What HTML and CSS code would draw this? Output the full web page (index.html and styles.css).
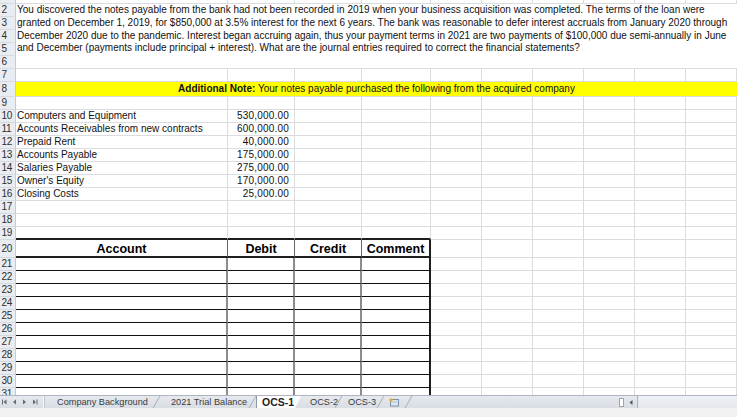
FILE: index.html
```html
<!DOCTYPE html>
<html>
<head>
<meta charset="utf-8">
<link rel="stylesheet" href="styles.css">
</head>
<body>
<div class="sheet">
  <div class="row r1"><div class="rh"></div><div></div><div></div><div></div><div></div><div></div><div></div><div></div><div></div><div></div><div></div></div>
  <div class="block">
    <div class="rhcol"><div class="rh">2</div><div class="rh">3</div><div class="rh">4</div><div class="rh">5</div><div class="rh">6</div></div>
    <div class="note">You discovered the notes payable from the bank had not been recorded in 2019 when your business acquisition was completed. The terms of the loan were<br>granted on December 1, 2019, for $850,000 at 3.5% interest for the next 6 years. The bank was reasonable to defer interest accruals from January 2020 through<br>December 2020 due to the pandemic. Interest began accruing again, thus your payment terms in 2021 are two payments of $100,000 due semi-annually in June<br>and December (payments include principal + interest). What are the journal entries required to correct the financial statements?</div>
  </div>
  <div class="row"><div class="rh">7</div><div></div><div></div><div></div><div></div><div></div><div></div><div></div><div></div><div></div><div></div></div>
  <div class="row r8"><div class="rh">8</div><div class="yl"><b>Additional Note:</b> Your notes payable purchased the following from the acquired company</div></div>
  <div class="row"><div class="rh">9</div><div></div><div></div><div></div><div></div><div></div><div></div><div></div><div></div><div></div><div></div></div>
  <div class="row"><div class="rh">10</div><div class="t">Computers and Equipment</div><div class="n">530,000.00</div><div></div><div></div><div></div><div></div><div></div><div></div><div></div><div></div></div>
  <div class="row"><div class="rh">11</div><div class="t">Accounts Receivables from new contracts</div><div class="n">600,000.00</div><div></div><div></div><div></div><div></div><div></div><div></div><div></div><div></div></div>
  <div class="row"><div class="rh">12</div><div class="t">Prepaid Rent</div><div class="n">40,000.00</div><div></div><div></div><div></div><div></div><div></div><div></div><div></div><div></div></div>
  <div class="row"><div class="rh">13</div><div class="t">Accounts Payable</div><div class="n">175,000.00</div><div></div><div></div><div></div><div></div><div></div><div></div><div></div><div></div></div>
  <div class="row"><div class="rh">14</div><div class="t">Salaries Payable</div><div class="n">275,000.00</div><div></div><div></div><div></div><div></div><div></div><div></div><div></div><div></div></div>
  <div class="row"><div class="rh">15</div><div class="t">Owner's Equity</div><div class="n">170,000.00</div><div></div><div></div><div></div><div></div><div></div><div></div><div></div><div></div></div>
  <div class="row"><div class="rh">16</div><div class="t">Closing Costs</div><div class="n">25,000.00</div><div></div><div></div><div></div><div></div><div></div><div></div><div></div><div></div></div>
  <div class="row"><div class="rh">17</div><div></div><div></div><div></div><div></div><div></div><div></div><div></div><div></div><div></div><div></div></div>
  <div class="row"><div class="rh">18</div><div></div><div></div><div></div><div></div><div></div><div></div><div></div><div></div><div></div><div></div></div>
  <div class="row"><div class="rh">19</div><div class="jt"></div><div class="jt"></div><div class="jt"></div><div class="jt"></div><div></div><div></div><div></div><div></div><div></div><div></div></div>
  <div class="row r20"><div class="rh">20</div><div class="jh">Account</div><div class="jh">Debit</div><div class="jh">Credit</div><div class="jh jr">Comment</div><div></div><div></div><div></div><div></div><div></div><div></div></div>
  <div class="row"><div class="rh">21</div><div class="jb"></div><div class="jb"></div><div class="jb"></div><div class="jb jr"></div><div></div><div></div><div></div><div></div><div></div><div></div></div>
  <div class="row"><div class="rh">22</div><div class="jb"></div><div class="jb"></div><div class="jb"></div><div class="jb jr"></div><div></div><div></div><div></div><div></div><div></div><div></div></div>
  <div class="row"><div class="rh">23</div><div class="jb"></div><div class="jb"></div><div class="jb"></div><div class="jb jr"></div><div></div><div></div><div></div><div></div><div></div><div></div></div>
  <div class="row"><div class="rh">24</div><div class="jb"></div><div class="jb"></div><div class="jb"></div><div class="jb jr"></div><div></div><div></div><div></div><div></div><div></div><div></div></div>
  <div class="row"><div class="rh">25</div><div class="jb"></div><div class="jb"></div><div class="jb"></div><div class="jb jr"></div><div></div><div></div><div></div><div></div><div></div><div></div></div>
  <div class="row"><div class="rh">26</div><div class="jb"></div><div class="jb"></div><div class="jb"></div><div class="jb jr"></div><div></div><div></div><div></div><div></div><div></div><div></div></div>
  <div class="row"><div class="rh">27</div><div class="jb"></div><div class="jb"></div><div class="jb"></div><div class="jb jr"></div><div></div><div></div><div></div><div></div><div></div><div></div></div>
  <div class="row"><div class="rh">28</div><div class="jb"></div><div class="jb"></div><div class="jb"></div><div class="jb jr"></div><div></div><div></div><div></div><div></div><div></div><div></div></div>
  <div class="row"><div class="rh">29</div><div class="jb"></div><div class="jb"></div><div class="jb"></div><div class="jb jr"></div><div></div><div></div><div></div><div></div><div></div><div></div></div>
  <div class="row"><div class="rh">30</div><div class="jb"></div><div class="jb"></div><div class="jb"></div><div class="jb jr"></div><div></div><div></div><div></div><div></div><div></div><div></div></div>
  <div class="row r31"><div class="rh">31</div><div class="jb"></div><div class="jb"></div><div class="jb"></div><div class="jb jr"></div><div></div><div></div><div></div><div></div><div></div><div></div></div>
</div>
<div class="tabbar">
  <div class="nav">
    <svg width="43" height="12" viewBox="0 0 43 12">
      <rect x="2" y="3.5" width="1" height="5" fill="#5f6873"/>
      <path d="M3.5 6 L6.5 3.5 L6.5 8.5 Z" fill="#5f6873"/>
      <path d="M13 6 L16 3.5 L16 8.5 Z" fill="#5f6873"/>
      <path d="M26 6 L23 3.5 L23 8.5 Z" fill="#5f6873"/>
      <path d="M36 6 L33 3.5 L33 8.5 Z" fill="#5f6873"/>
      <rect x="36.5" y="3.5" width="1" height="5" fill="#5f6873"/>
    </svg>
  </div>
  <div class="tab tb1">Company Background</div>
  <div class="tab tb2">2021 Trial Balance</div>
  <div class="tab active">OCS-1</div>
  <div class="tab tb4">OCS-2</div>
  <div class="tab tb5">OCS-3</div>
  <div class="tab tbnew">
    <svg width="12" height="11" viewBox="0 0 12 11">
      <rect x="2.5" y="3.5" width="8" height="6.5" fill="#dbe7f3" stroke="#7d90a8" stroke-width="1"/>
      <line x1="2.5" y1="6" x2="10.5" y2="6" stroke="#a9b8ca" stroke-width="0.8"/>
      <path d="M3 1.5 L3.7 3.3 L5.5 4 L3.7 4.7 L3 6.5 L2.3 4.7 L0.5 4 L2.3 3.3 Z" fill="#f2a900"/>
    </svg>
  </div>
  <div class="fill"></div>
  <div class="hscroll">
    <span class="split"></span>
    <svg class="larrow" width="9" height="11" viewBox="0 0 9 11"><path d="M2.5 5.5 L5.5 3 L5.5 8 Z" fill="#4d5560"/></svg>
    <span class="track"></span>
  </div>
</div>
<div class="status"></div>
</body>
</html>
```

FILE: styles.css
```css
* { box-sizing: border-box; margin: 0; padding: 0; }
html, body { background: #ffffff; }
body {
  width: 737px;
  height: 417px;
  overflow: hidden;
  font-family: "Liberation Sans", Arial, sans-serif;
  font-size: 10px;
  color: #111111;
}
.sheet { display: flex; flex-direction: column; }
.row {
  display: grid;
  grid-template-columns: 16px 212px 67px 67px 69px repeat(6, 51px);
  height: 13px;
}
.row > div {
  border-right: 1px solid #dadcdf;
  border-bottom: 1px solid #dadcdf;
  line-height: 12px;
  white-space: nowrap;
  overflow: hidden;
}
.row > .rh, .rhcol > .rh {
  background: #e9edf2;
  border-right: 1px solid #c5cbd3;
  border-bottom: 1px solid #d5dae0;
  color: #2e2e2e;
  font-size: 10px;
  letter-spacing: -0.4px;
  line-height: 12px;
  padding-left: 1.5px;
  white-space: nowrap;
  overflow: hidden;
}
.row.r1 { height: 4px; }
.block {
  display: grid;
  grid-template-columns: 16px 721px;
  height: 65px;
}
.rhcol { display: flex; flex-direction: column; }
.rhcol > .rh { height: 13px; }
.note {
  border-bottom: 1px solid #dadcdf;
  padding-left: 1px;
  line-height: 12.8px;
  white-space: nowrap;
  overflow: hidden;
}
.row.r8 { height: 15px; }
.row > .yl {
  grid-column: 2 / -1;
  background: #ffff00;
  text-align: center;
  line-height: 14px;
  border-right: 0;
}
.row.r8 > .rh { line-height: 14px; }
.row > .t { padding-left: 1px; overflow: visible; }
.row > .n { text-align: right; padding-right: 5px; letter-spacing: 0.2px; }
.row > .jt { border-bottom: 2px solid #1e1e1e; }
.row.r20 { height: 18px; }
.row.r20 > .rh { line-height: 18px; }
.row > .jh {
  border-bottom: 2px solid #1e1e1e;
  border-right: 1px solid #666666;
  font-weight: bold;
  font-size: 12.5px;
  line-height: 18px;
  text-align: center;
  color: #000000;
}
.row > .jb {
  border-bottom: 1px solid #111111;
  border-right: 2px solid #8c8c8c;
}
.row > .jr { border-right: 2px solid #1e1e1e; }
.row.r31 { height: 7px; }
.row.r31 > div { border-bottom: 0; }

.tabbar {
  display: flex;
  align-items: stretch;
  height: 13px;
  background: linear-gradient(#e6e9ee, #d9dee4);
  border-top: 1px solid #aeb5bf;
  font-size: 9.2px;
  color: #3a3a3a;
}
.nav {
  width: 44px;
  border-right: 1px solid #f7f9fb;
  box-shadow: 1px 0 0 #c0c6ce;
}
.nav svg { display: block; }
.tab {
  position: relative;
  line-height: 13px;
  white-space: nowrap;
}
.tab::after {
  content: "";
  position: absolute;
  right: 3px;
  top: 0;
  bottom: 0;
  width: 1px;
  background: #a3abb5;
  transform: skewX(-30deg);
}
.tb1 { width: 116px; padding-left: 13px; }
.tb2 { width: 96px; padding-left: 11px; }
.active {
  width: 46px;
  padding-left: 5px;
  background: #ffffff;
  border-left: 1px solid #8e97a2;
  font-weight: bold;
  font-size: 10.5px;
  color: #222222;
  clip-path: polygon(0 -2px, 100% -2px, calc(100% - 7px) 100%, 0 100%);
}
.active::after { display: none; }
.tb4 { width: 40px; padding-left: 8px; }
.tb5 { width: 42px; padding-left: 6px; }
.tbnew { width: 28px; padding-left: 4px; }
.tbnew svg { display: block; }
.fill { flex: 1; }
.hscroll {
  width: 120px;
  display: flex;
  align-items: center;
}
.split {
  width: 5px;
  height: 9px;
  background: #ffffff;
  border: 1px solid #9aa3ae;
  margin-left: 2px;
}
.larrow { display: block; margin-left: 3px; }
.track {
  flex: 1;
  align-self: stretch;
  margin-left: 1px;
  background: linear-gradient(#eef1f5, #e3e7ec);
  border-left: 1px solid #a9b1bb;
}
.status {
  height: 9px;
  background: #f2f2f2;
}
```
